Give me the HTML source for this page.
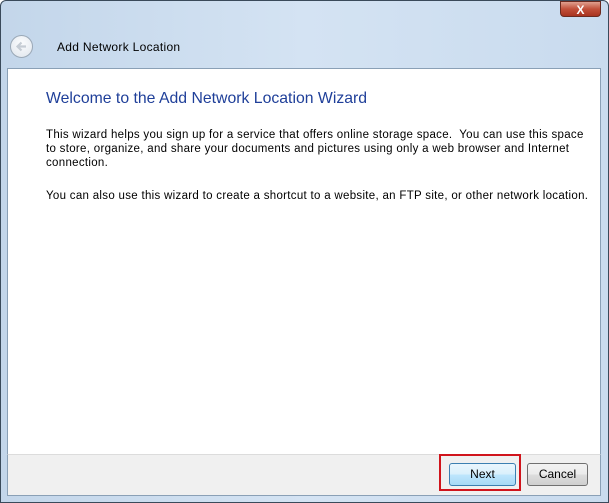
<!DOCTYPE html>
<html><head><style>
html,body{margin:0;padding:0;width:609px;height:503px;overflow:hidden;font-family:"Liberation Sans",sans-serif;}
.frame{position:absolute;left:0;top:0;width:607px;height:501px;border:1px solid #3a4a5a;border-radius:6px 6px 0 0;background:linear-gradient(90deg,#c3d6ea 0%,#d4e3f3 50%,#c9dbee 100%);}
.close{position:absolute;left:560px;top:1px;width:41px;height:16px;border:1px solid #6b2a1f;border-radius:0 0 4px 4px;background:linear-gradient(#e0a08f,#c2503a 50%,#a8341f);color:#fff;font:bold 12px "Liberation Sans",sans-serif;text-align:center;line-height:16px;box-sizing:border-box;}
.back{position:absolute;left:10px;top:35px;width:23px;height:23px;border-radius:50%;border:1px solid #9aa8b6;background:radial-gradient(circle at 50% 35%,#fbfcfd,#dfe5ec);box-sizing:border-box;}
.ttl{position:absolute;left:57px;top:40px;font-size:12px;letter-spacing:0.3px;color:#000;}
.content{position:absolute;left:7px;top:68px;width:594px;height:386px;background:#fff;border:1px solid #8aa0b6;border-bottom:none;box-sizing:border-box;}
.foot{position:absolute;left:7px;top:454px;width:594px;height:42px;background:#f0f0f0;border:1px solid #8aa0b6;border-top:1px solid #dcdcdc;box-sizing:border-box;}
h1{position:absolute;left:46px;top:90px;margin:0;font-weight:normal;font-size:15.8px;color:#1f3f99;white-space:nowrap;}
p{position:absolute;left:46px;margin:0;font-size:11.5px;letter-spacing:0.3px;line-height:14px;color:#000;white-space:nowrap;}
.btn{position:absolute;top:463px;height:23px;border:1px solid #707070;border-radius:3px;background:linear-gradient(#f2f2f2,#ebebeb 50%,#dddddd 51%,#cfcfcf);font-size:12px;text-align:center;line-height:21px;box-sizing:border-box;}
.next{left:449px;width:67px;border-color:#3c7fb1;background:linear-gradient(#eaf6fd,#d9f0fc 50%,#bee6fd 51%,#a7d9f5);}
.cancel{left:527px;width:61px;}
.red{position:absolute;left:439px;top:454px;width:82px;height:37px;border:2px solid #d0141c;box-sizing:border-box;}
</style></head><body>
<div class="frame"></div>
<div class="close">X</div>
<div class="back"><svg width="21" height="21" viewBox="0 0 21 21"><path d="M15 10.5H7M10.5 6.5L6.5 10.5L10.5 14.5" stroke="#c5ccd4" stroke-width="2.2" fill="none"/></svg></div>
<div class="ttl">Add Network Location</div>
<div class="content"></div>
<div class="foot"></div>
<h1>Welcome to the Add Network Location Wizard</h1>
<p style="top:128px">This wizard helps you sign up for a service that offers online storage space.&nbsp; You can use this space<br>to store, organize, and share your documents and pictures using only a web browser and Internet<br>connection.</p>
<p style="top:189px">You can also use this wizard to create a shortcut to a website, an FTP site, or other network location.</p>
<div class="btn next">Next</div>
<div class="btn cancel">Cancel</div>
<div class="red"></div>
</body></html>
